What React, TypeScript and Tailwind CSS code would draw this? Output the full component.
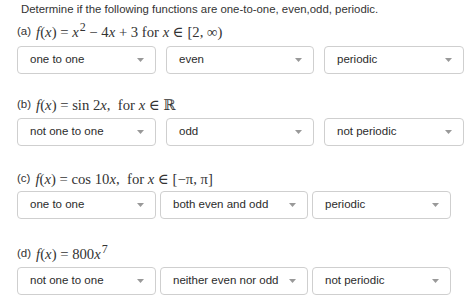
import React from "react";

const SANS = { fontFamily: '"Liberation Sans", Arial, sans-serif' };
const SERIF = { fontFamily: '"Liberation Serif", "DejaVu Serif", serif' };

function V({ children }: { children: React.ReactNode }) {
  return <i className="italic">{children}</i>;
}

function Sup({ children }: { children: React.ReactNode }) {
  return <span className="relative -top-[6px] text-[12px] ml-[1px]">{children}</span>;
}

function Select({ value, w }: { value: string; w: string }) {
  return (
    <div
      className={`${w} h-[28px] flex items-center justify-between rounded-[4px] border border-[#cfcfcf] bg-white pl-[12px] pr-[11px] text-[11.5px] text-[#2b2b2b] whitespace-nowrap`}
      style={SANS}
    >
      <span>{value}</span>
      <svg width="7" height="4" viewBox="0 0 7 4" className="shrink-0">
        <polygon points="0,0 7,0 3.5,4" fill="#999" />
      </svg>
    </div>
  );
}

function Label({ tag, children }: { tag: string; children: React.ReactNode }) {
  return (
    <div className="h-5 flex items-center whitespace-nowrap text-[#333]">
      <span className="text-[11.5px]" style={SANS}>({tag})</span>
      <span className="ml-[5px] text-[14.7px] leading-5" style={SERIF}>
        {children}
      </span>
    </div>
  );
}

export default function App() {
  const wide = "flex gap-[10px]";
  const tight = "flex gap-[4px]";
  return (
    <div className="w-[474px] h-[305px] bg-white pl-[17px] pt-[1px] overflow-hidden">
      <div className="h-4 pl-[4px] text-[11.4px] leading-4 text-[#333] whitespace-nowrap" style={SANS}>
        Determine if the following functions are one-to-one, even,odd, periodic.
      </div>

      <div className="mt-[4px] pt-[1px]">
        <Label tag="a">
          <V>f</V>(<V>x</V>) = <V>x</V><Sup>2</Sup> − 4<V>x</V> + 3 for <V>x</V> ∈ [2, ∞)
        </Label>
      </div>
      <div className={`mt-[4px] ${wide}`}>
        <Select value="one to one" w="w-[139px]" />
        <Select value="even" w="w-[148px]" />
        <Select value="periodic" w="w-[140px]" />
      </div>

      <div className="mt-[21px]">
        <Label tag="b">
          <V>f</V>(<V>x</V>) = sin 2<V>x</V>,&nbsp; for <V>x</V> ∈ ℝ
        </Label>
      </div>
      <div className={`mt-[3px] ${wide}`}>
        <Select value="not one to one" w="w-[139px]" />
        <Select value="odd" w="w-[148px]" />
        <Select value="not periodic" w="w-[140px]" />
      </div>

      <div className="mt-[23px]">
        <Label tag="c">
          <V>f</V>(<V>x</V>) = cos 10<V>x</V>,&nbsp; for <V>x</V> ∈ [−π, π]
        </Label>
      </div>
      <div className={`mt-[2px] ${tight}`}>
        <Select value="one to one" w="w-[139px]" />
        <Select value="both even and odd" w="w-[148px]" />
        <Select value="periodic" w="w-[139px]" />
      </div>

      <div className="mt-[25px]">
        <Label tag="d">
          <V>f</V>(<V>x</V>) = 800<V>x</V><Sup>7</Sup>
        </Label>
      </div>
      <div className={`mt-[3px] ${tight}`}>
        <Select value="not one to one" w="w-[139px]" />
        <Select value="neither even nor odd" w="w-[148px]" />
        <Select value="not periodic" w="w-[139px]" />
      </div>
    </div>
  );
}
